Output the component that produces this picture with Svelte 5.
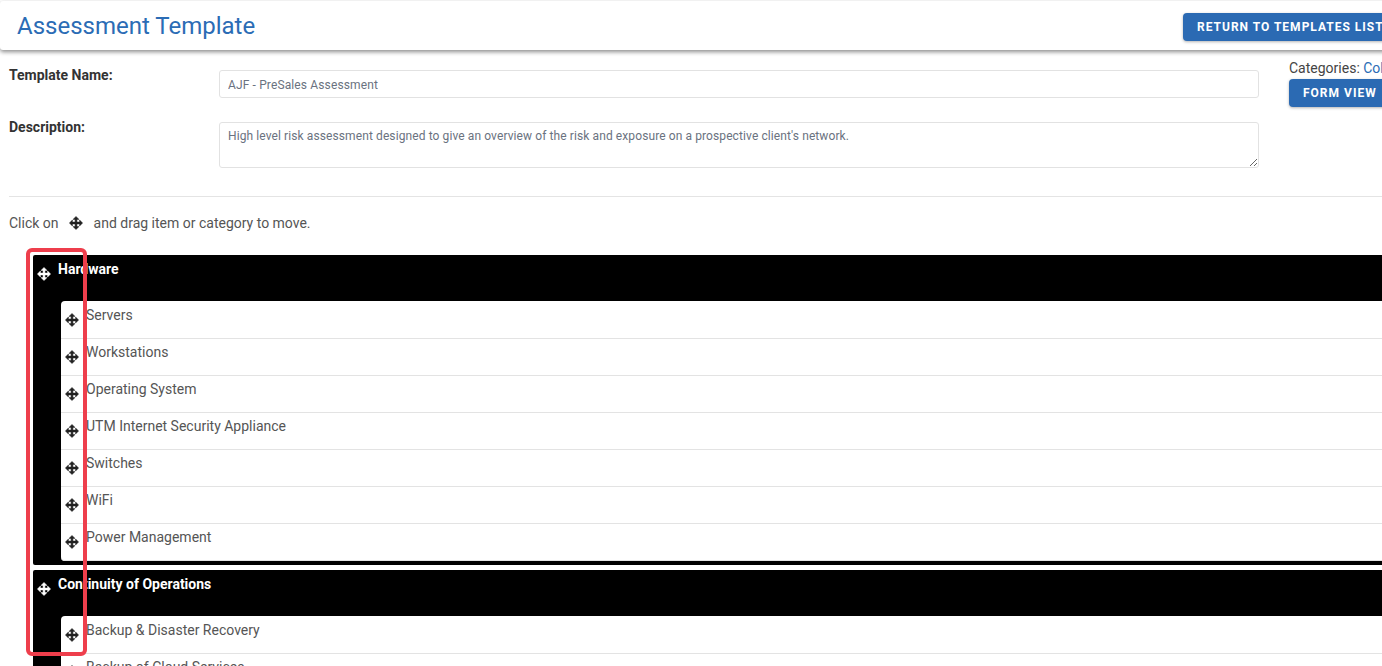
<script>
	const move = 'M7 .4L10 3.4H7.9V6.1H10.6V4L13.6 7L10.6 10V7.9H7.9V10.6H10L7 13.6L4 10.6H6.1V7.9H3.4V10L.4 7L3.4 4V6.1H6.1V3.4H4Z'

	const description = "High level risk assessment designed to give an overview of the risk and exposure on a prospective client's network."

	const categories = [
		{
			name: 'Hardware',
			items: ['Servers', 'Workstations', 'Operating System', 'UTM Internet Security Appliance', 'Switches', 'WiFi', 'Power Management']
		},
		{
			name: 'Continuity of Operations',
			items: ['Backup & Disaster Recovery', 'Backup of Cloud Services']
		}
	]
</script>

{#snippet moveIcon()}
	<svg class="move" viewBox="0 0 14 14" aria-hidden="true"><path d={move} fill="currentColor" stroke="currentColor" stroke-width=".5" stroke-linejoin="round" /></svg>
{/snippet}

<div class="page">
	<header class="topbar">
		<h1>Assessment Template</h1>
		<button class="btn">Return to templates list</button>
	</header>

	<div class="form">
		<div class="fields">
			<div class="row">
				<label for="tpl-name">Template Name:</label>
				<input id="tpl-name" type="text" value="AJF - PreSales Assessment" />
			</div>
			<div class="row">
				<label for="tpl-desc">Description:</label>
				<textarea id="tpl-desc">{description}</textarea>
			</div>
		</div>
		<div class="side">
			<div class="cats">Categories: <a href="#top">Collapse All</a></div>
			<button class="btn">Form view</button>
		</div>
	</div>

	<hr />

	<p class="hint">Click on <span class="hint-icon">{@render moveIcon()}</span> and drag item or category to move.</p>

	<div class="tree">
		{#each categories as cat}
			<section class="category">
				<div class="cat-head">
					<span class="handle">{@render moveIcon()}</span>
					<span class="cat-name">{cat.name}</span>
				</div>
				<ul>
					{#each cat.items as item}
						<li>
							<span class="handle">{@render moveIcon()}</span>
							<span class="item-name">{item}</span>
						</li>
					{/each}
				</ul>
			</section>
		{/each}
		<div class="callout"></div>
	</div>
</div>

<style>
	:global(body) {
		margin: 0;
		background: #fff;
		overflow: hidden;
	}

	.page {
		width: 1500px;
		height: 666px;
		overflow: hidden;
		font-family: Roboto, 'Liberation Sans', sans-serif;
		font-size: 14px;
		color: #444;
	}

	.topbar {
		display: flex;
		align-items: center;
		justify-content: space-between;
		box-sizing: border-box;
		height: 49px;
		margin-top: 1px;
		padding: 0 100px 0 17px;
		border-radius: 3px 0 0 3px;
		box-shadow: 0 2px 4px rgba(0, 0, 0, 0.45);
	}

	h1 {
		margin: 0;
		font-size: 24px;
		font-weight: 400;
		color: #2b6cb5;
	}

	.btn {
		height: 28px;
		padding: 0 14px;
		border: 0;
		border-radius: 4px;
		background: #2b6ab3;
		color: #fff;
		font: 700 12px Roboto, sans-serif;
		letter-spacing: 1px;
		text-transform: uppercase;
		white-space: nowrap;
		box-shadow: 0 1px 3px rgba(0, 0, 0, 0.3);
	}

	.topbar .btn {
		width: 217px;
		margin-top: 3px;
		text-align: left;
	}

	.form {
		display: flex;
		padding: 9px 0 0 9px;
	}

	.fields {
		width: 1250px;
		padding-top: 11px;
	}

	.row {
		display: flex;
		margin-bottom: 24px;
	}

	label {
		flex: 0 0 210px;
		font-weight: 700;
		font-size: 14px;
		line-height: 10px;
		color: #333;
	}

	input,
	textarea {
		display: block;
		box-sizing: border-box;
		flex: 0 0 1040px;
		width: 1040px;
		border: 1px solid #e2e2e2;
		border-radius: 3px;
		padding: 0 8px;
		background: #fff;
		color: #6a7280;
		font: 12px/16px Roboto, sans-serif;
		letter-spacing: 0.13px;
		outline: none;
	}

	input {
		height: 28px;
		padding-top: 2px;
	}

	textarea {
		height: 46px;
		padding-top: 5px;
		letter-spacing: 0.1px;
		resize: vertical;
	}

	.side {
		margin-left: 30px;
		white-space: nowrap;
	}

	.cats {
		height: 20px;
		line-height: 18px;
		color: #444;
	}

	.cats a {
		color: #2b6cb5;
		text-decoration: none;
	}

	hr {
		height: 1px;
		margin: 4px 0 0 9px;
		border: 0;
		background: #e4e4e4;
	}

	.hint {
		display: flex;
		align-items: center;
		height: 20px;
		margin: 16px 0 0 9px;
		color: #555;
	}

	.hint-icon {
		display: flex;
		margin: 0 11px 0 10px;
		color: #222;
	}

	.move {
		width: 14px;
		height: 14px;
		display: block;
	}

	.tree {
		position: relative;
		margin: 22px 0 0 33px;
	}

	.category {
		margin-bottom: 5px;
		padding-bottom: 4px;
		background: #000;
		border-radius: 2px 0 0 2px;
	}

	.cat-head {
		display: flex;
		height: 46px;
		color: #fff;
	}

	.cat-head .handle {
		flex: 0 0 25px;
		padding: 12px 0 0 4px;
		box-sizing: border-box;
	}

	.cat-name {
		padding-top: 6px;
		font-weight: 700;
		line-height: 16px;
	}

	ul {
		margin: 0 0 0 28px;
		padding: 0;
		list-style: none;
		background: #fff;
		border-radius: 4px 0 0 4px;
	}

	li {
		display: flex;
		box-sizing: border-box;
		height: 37px;
		border-top: 1px solid #e3e3e3;
		color: #555;
	}

	li:first-child {
		border-top-color: transparent;
	}

	li:last-child {
		height: 38px;
		border-bottom: 1px solid #e3e3e3;
		border-bottom-left-radius: 4px;
	}

	li .handle {
		flex: 0 0 25px;
		padding: 11px 0 0 4px;
		box-sizing: border-box;
		color: #222;
	}

	.item-name {
		padding-top: 5px;
		line-height: 16px;
	}

	.callout {
		position: absolute;
		left: -7px;
		top: -7px;
		box-sizing: border-box;
		width: 61px;
		height: 408px;
		border: 4px solid #ee3e4c;
		border-radius: 6px;
		pointer-events: none;
	}
</style>
